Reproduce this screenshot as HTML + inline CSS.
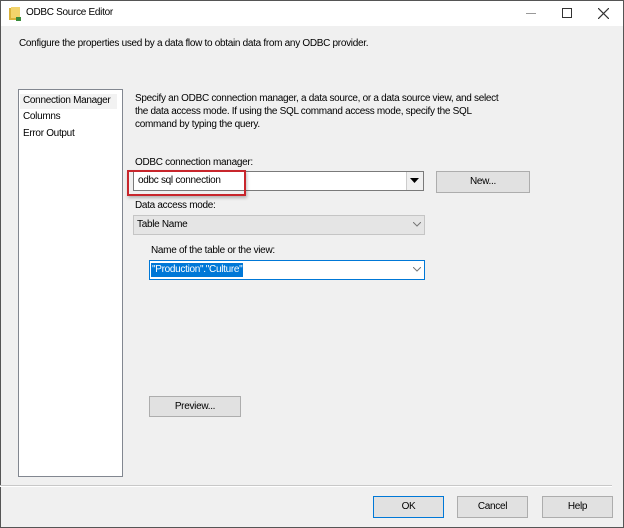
<!DOCTYPE html><html><head><style>
*{margin:0;padding:0;box-sizing:border-box}
body{width:624px;height:528px;background:#f0f0f0;font-family:"Liberation Sans",sans-serif;font-size:10px;letter-spacing:-0.3px;color:#000;position:relative;overflow:hidden}
.a{position:absolute;white-space:nowrap}
.btn{position:absolute;background:#e1e1e1;border:1px solid #adadad;text-align:center;line-height:19px}
</style></head><body>
<div class="a" style="left:0;top:0;width:624px;height:528px;border:1px solid #555;border-top:none"></div>
<div class="a" style="left:1px;top:0;width:622px;height:26px;background:#fff"></div>
<div class="a" style="left:0;top:0;width:624px;height:1px;background:#555"></div>
<svg class="a" style="left:9px;top:7px" width="12" height="14"><rect x="0" y="1" width="10" height="12" fill="#d9b23a"/><rect x="2" y="0" width="9" height="11" fill="#f2d36b"/><rect x="7" y="10" width="5" height="4" fill="#3a8b3a"/></svg>
<div class="a" style="left:26px;top:7px">ODBC Source Editor</div>
<div class="a" style="left:526px;top:13px;width:10px;height:1px;background:#999"></div>
<div class="a" style="left:562px;top:8px;width:10px;height:10px;border:1px solid #333"></div>
<svg class="a" style="left:598px;top:8px" width="11" height="11"><path d="M0 0L11 11M11 0L0 11" stroke="#333" stroke-width="1.2"/></svg>
<div class="a" style="left:19px;top:38px">Configure the properties used by a data flow to obtain data from any ODBC provider.</div>
<div class="a" style="left:18px;top:89px;width:105px;height:388px;background:#fff;border:1px solid #828790"></div>
<div class="a" style="left:20px;top:94px;width:97px;height:15px;background:#f2f2f2"></div>
<div class="a" style="left:23px;top:95px">Connection Manager</div>
<div class="a" style="left:23px;top:111px">Columns</div>
<div class="a" style="left:23px;top:128px">Error Output</div>
<div class="a" style="left:135px;top:92px;line-height:13px">Specify an ODBC connection manager, a data source, or a data source view, and select<br>the data access mode. If using the SQL command access mode, specify the SQL<br>command by typing the query.</div>
<div class="a" style="left:135px;top:157px">ODBC connection manager:</div>
<div class="a" style="left:133px;top:171px;width:291px;height:20px;background:#fff;border:1px solid #7a7a7a"></div>
<div class="a" style="left:406px;top:172px;width:17px;height:18px;background:#f0f0f0;border-left:1px solid #ccc"></div>
<svg class="a" style="left:410px;top:178px" width="9" height="5"><path d="M0 0H9L4.5 5Z" fill="#000"/></svg>
<div class="a" style="left:138px;top:175px">odbc sql connection</div>
<div class="a" style="left:127px;top:170px;width:119px;height:26px;border:2px solid #c8262c;box-shadow:1px 2px 3px rgba(0,0,0,.25)"></div>
<div class="btn" style="left:436px;top:171px;width:94px;height:22px">New...</div>
<div class="a" style="left:135px;top:200px">Data access mode:</div>
<div class="a" style="left:133px;top:215px;width:292px;height:20px;background:#e5e5e5;border:1px solid #c5c5c5"></div>
<div class="a" style="left:137px;top:219px">Table Name</div>
<svg class="a" style="left:413px;top:222px" width="8" height="5"><path d="M0 0L4 4L8 0" stroke="#777" fill="none"/></svg>
<div class="a" style="left:151px;top:245px">Name of the table or the view:</div>
<div class="a" style="left:149px;top:260px;width:276px;height:20px;background:#fff;border:1px solid #0078d7"></div>
<div class="a" style="left:151px;top:263px;height:14px;background:#0078d7;color:#fff;padding:0 1px;line-height:14px">"Production"."Culture"</div>
<svg class="a" style="left:413px;top:267px" width="8" height="5"><path d="M0 0L4 4L8 0" stroke="#777" fill="none"/></svg>
<div class="btn" style="left:149px;top:396px;width:92px;height:21px">Preview...</div>
<div class="a" style="left:0;top:485px;width:612px;height:1px;background:#c8c8c8"></div>
<div class="a" style="left:0;top:486px;width:612px;height:1px;background:#fff"></div>
<div class="btn" style="left:373px;top:496px;width:71px;height:22px;border:1px solid #0078d7;line-height:20px">OK</div>
<div class="btn" style="left:457px;top:496px;width:71px;height:22px;line-height:20px">Cancel</div>
<div class="btn" style="left:542px;top:496px;width:71px;height:22px;line-height:20px">Help</div>
</body></html>
